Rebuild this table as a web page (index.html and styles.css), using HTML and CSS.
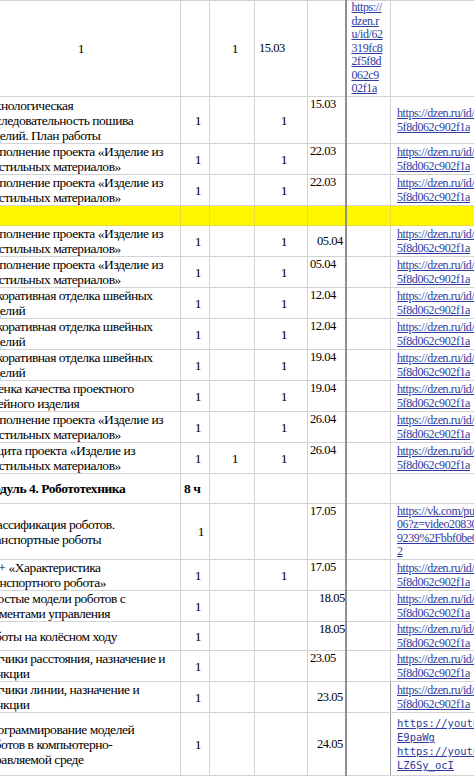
FILE: index.html
```html
<!DOCTYPE html>
<html lang="ru">
<head>
<meta charset="utf-8">
<title>Таблица</title>
<link rel="stylesheet" href="styles.css">
</head>
<body>
<table class="sheet">
  <colgroup>
    <col class="c-name"><col class="c-n1"><col class="c-n2"><col class="c-n3"><col class="c-date"><col class="c-empty"><col class="c-link">
  </colgroup>
  <tbody>
    <tr class="r-first">
      <td class="name center">1</td>
      <td class="num"></td>
      <td class="num">1</td>
      <td class="date mid first-date">15.03</td>
      <td class="num sep"></td>
      <td class="link narrow"><a href="#">https://<br>dzen.r<br>u/id/62<br>319fc8<br>2f5f8d<br>062c9<br>02f1a</a></td>
      <td></td>
    </tr>
    <tr class="r-3">
      <td class="name">Технологическая<br>последовательность пошива<br>изделий. План работы</td>
      <td class="num">1</td><td class="num"></td><td class="num">1</td>
      <td class="date sep">15.03</td><td></td>
      <td class="link"><a href="#">https://dzen.ru/id/62319fc82f<br>5f8d062c902f1a</a></td>
    </tr>
    <tr>
      <td class="name">Выполнение проекта «Изделие из<br>текстильных материалов»</td>
      <td class="num">1</td><td class="num"></td><td class="num">1</td>
      <td class="date sep">22.03</td><td></td>
      <td class="link"><a href="#">https://dzen.ru/id/62319fc82f<br>5f8d062c902f1a</a></td>
    </tr>
    <tr>
      <td class="name">Выполнение проекта «Изделие из<br>текстильных материалов»</td>
      <td class="num">1</td><td class="num"></td><td class="num">1</td>
      <td class="date sep">22.03</td><td></td>
      <td class="link"><a href="#">https://dzen.ru/id/62319fc82f<br>5f8d062c902f1a</a></td>
    </tr>
    <tr class="r-yellow">
      <td></td><td></td><td></td><td></td><td class="sep"></td><td></td><td></td>
    </tr>
    <tr>
      <td class="name">Выполнение проекта «Изделие из<br>текстильных материалов»</td>
      <td class="num">1</td><td class="num"></td><td class="num">1</td>
      <td class="date mid sep">05.04</td><td></td>
      <td class="link"><a href="#">https://dzen.ru/id/62319fc82f<br>5f8d062c902f1a</a></td>
    </tr>
    <tr>
      <td class="name">Выполнение проекта «Изделие из<br>текстильных материалов»</td>
      <td class="num">1</td><td class="num"></td><td class="num">1</td>
      <td class="date sep">05.04</td><td></td>
      <td class="link"><a href="#">https://dzen.ru/id/62319fc82f<br>5f8d062c902f1a</a></td>
    </tr>
    <tr>
      <td class="name">Декоративная отделка швейных<br>изделий</td>
      <td class="num">1</td><td class="num"></td><td class="num">1</td>
      <td class="date sep">12.04</td><td></td>
      <td class="link"><a href="#">https://dzen.ru/id/62319fc82f<br>5f8d062c902f1a</a></td>
    </tr>
    <tr>
      <td class="name">Декоративная отделка швейных<br>изделий</td>
      <td class="num">1</td><td class="num"></td><td class="num">1</td>
      <td class="date sep">12.04</td><td></td>
      <td class="link"><a href="#">https://dzen.ru/id/62319fc82f<br>5f8d062c902f1a</a></td>
    </tr>
    <tr>
      <td class="name">Декоративная отделка швейных<br>изделий</td>
      <td class="num">1</td><td class="num"></td><td class="num">1</td>
      <td class="date sep">19.04</td><td></td>
      <td class="link"><a href="#">https://dzen.ru/id/62319fc82f<br>5f8d062c902f1a</a></td>
    </tr>
    <tr>
      <td class="name">Оценка качества проектного<br>швейного изделия</td>
      <td class="num">1</td><td class="num"></td><td class="num">1</td>
      <td class="date sep">19.04</td><td></td>
      <td class="link"><a href="#">https://dzen.ru/id/62319fc82f<br>5f8d062c902f1a</a></td>
    </tr>
    <tr>
      <td class="name">Выполнение проекта «Изделие из<br>текстильных материалов»</td>
      <td class="num">1</td><td class="num"></td><td class="num">1</td>
      <td class="date sep">26.04</td><td></td>
      <td class="link"><a href="#">https://dzen.ru/id/62319fc82f<br>5f8d062c902f1a</a></td>
    </tr>
    <tr>
      <td class="name">Защита проекта «Изделие из<br>текстильных материалов»</td>
      <td class="num">1</td><td class="num">1</td><td class="num">1</td>
      <td class="date sep">26.04</td><td></td>
      <td class="link"><a href="#">https://dzen.ru/id/62319fc82f<br>5f8d062c902f1a</a></td>
    </tr>
    <tr class="r-module">
      <td class="name bold">Модуль 4. Робототехника</td>
      <td class="hours bold">8 ч</td><td></td><td></td>
      <td class="sep"></td><td></td><td></td>
    </tr>
    <tr class="r-vk">
      <td class="name">Классификация роботов.<br>Транспортные роботы</td>
      <td class="num right">1</td><td class="num"></td><td class="num"></td>
      <td class="date sep">17.05</td><td></td>
      <td class="link vk"><a href="#">https://vk.com/public2083<br>06?z=video208306_45623<br>9239%2Fbbf0be0c5e0e<br>2</a></td>
    </tr>
    <tr>
      <td class="name">ПР+ «Характеристика<br>транспортного робота»</td>
      <td class="num">1</td><td class="num"></td><td class="num">1</td>
      <td class="date sep">17.05</td><td></td>
      <td class="link"><a href="#">https://dzen.ru/id/62319fc82f<br>5f8d062c902f1a</a></td>
    </tr>
    <tr>
      <td class="name">Простые модели роботов с<br>элементами управления</td>
      <td class="num">1</td><td class="num"></td><td class="num"></td>
      <td class="date indent sep">18.05</td><td></td>
      <td class="link"><a href="#">https://dzen.ru/id/62319fc82f<br>5f8d062c902f1a</a></td>
    </tr>
    <tr>
      <td class="name">Роботы на колёсном ходу</td>
      <td class="num">1</td><td class="num"></td><td class="num"></td>
      <td class="date indent sep">18.05</td><td></td>
      <td class="link"><a href="#">https://dzen.ru/id/62319fc82f<br>5f8d062c902f1a</a></td>
    </tr>
    <tr>
      <td class="name">Датчики расстояния, назначение и<br>функции</td>
      <td class="num">1</td><td class="num"></td><td class="num"></td>
      <td class="date sep">23.05</td><td></td>
      <td class="link"><a href="#">https://dzen.ru/id/62319fc82f<br>5f8d062c902f1a</a></td>
    </tr>
    <tr>
      <td class="name">Датчики линии, назначение и<br>функции</td>
      <td class="num">1</td><td class="num"></td><td class="num"></td>
      <td class="date mid sep">23.05</td><td class="dark-right"></td>
      <td class="link"><a href="#">https://dzen.ru/id/62319fc82f<br>5f8d062c902f1a</a></td>
    </tr>
    <tr class="r-last">
      <td class="name">Программирование моделей<br>роботов в компьютерно-<br>управляемой среде</td>
      <td class="num">1</td><td class="num"></td><td class="num"></td>
      <td class="date mid sep">24.05</td><td class="dark-right"></td>
      <td class="link sans"><a href="#">https://youtu.be/4fKq7<br>E9paWg</a><br><a href="#">https://youtu.be/Wm2h<br>LZ6Sy_ocI</a></td>
    </tr>
  </tbody>
</table>
</body>
</html>
```

FILE: styles.css
```css
html, body {
  margin: 0;
  padding: 0;
  background: #ffffff;
  overflow: hidden;
}

.sheet {
  border-collapse: collapse;
  table-layout: fixed;
  width: 556px;
  margin-left: -26px;
  font-family: "Liberation Serif", "Times New Roman", serif;
  font-size: 13.5px;
  letter-spacing: -0.45px;
  line-height: 15px;
  color: #000000;
}

.c-name { width: 206px; }
.c-n1 { width: 29px; }
.c-n2 { width: 45px; }
.c-n3 { width: 53px; }
.c-date { width: 38px; }
.c-empty { width: 45px; }
.c-link { width: 140px; }

.sheet td {
  border: 1px solid #d3d3d3;
  padding: 0;
  vertical-align: middle;
  white-space: nowrap;
  overflow: hidden;
}

.name {
  padding-left: 7px !important;
  text-align: left;
}

.name.center {
  text-align: center;
}

.bold {
  font-weight: bold;
}

.num {
  text-align: center;
  padding-left: 6px !important;
}

.num.right {
  padding-left: 12px !important;
}

.hours {
  padding-left: 3px !important;
}

.date {
  vertical-align: top !important;
  padding-left: 2px !important;
  font-size: 12.5px;
  letter-spacing: -0.5px;
}

.date.mid {
  vertical-align: middle !important;
  padding-left: 9px !important;
}

.date.indent {
  padding-left: 11px !important;
}

.date.first-date {
  padding-left: 4px !important;
}

.sheet td.sep {
  border-right: 2px solid #8f8f8f;
}

.sheet td.dark-right {
  border-right: 1px solid #9a9a9a;
}

.link {
  padding-left: 6px !important;
  font-size: 12px;
  letter-spacing: -0.4px;
  line-height: 14px;
}

.link.narrow {
  padding-left: 5px !important;
  line-height: 13.5px;
}

.link.vk {
  line-height: 13.5px;
}

.link.sans {
  font-family: "DejaVu Sans Mono", "Liberation Mono", monospace;
  font-size: 10.5px;
  letter-spacing: 0;
  line-height: 14px;
}

.link a {
  color: #2f3b9e;
  text-decoration: underline;
}

.r-first td { height: 95px; }
.r-3 td { height: 46px; }
.r-yellow td {
  height: 19px;
  background: #fff700;
  border-color: #e6dd3a;
}
.r-yellow td.sep { border-right: 2px solid #8f8f8f; }
.r-module td { height: 29px; }
.r-vk td { height: 55px; }
.r-last td { height: 62px; }
```
